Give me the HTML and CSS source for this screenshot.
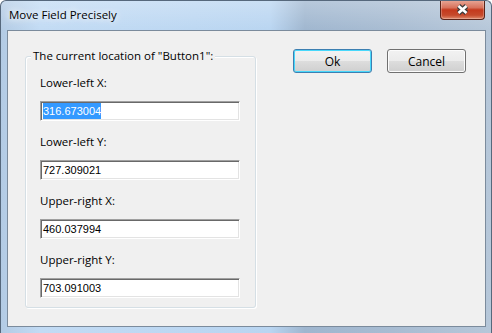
FILE: index.html
```html
<!DOCTYPE html>
<html lang="en">
<head>
    <meta charset="UTF-8">
    <title>Move Field Precisely</title>
    <link rel="stylesheet" href="styles.css">
</head>
<body>
    <div class="window">
        <div class="titlebar">
            <span class="title">Move Field Precisely</span>
            <div class="close">
                <svg width="13" height="11" viewBox="0 0 13 11">
                    <path d="M2.5 2 L10.5 9 M10.5 2 L2.5 9" stroke="#3c3c3c" stroke-width="5" fill="none"/>
                    <path d="M2.5 2 L10.5 9 M10.5 2 L2.5 9" stroke="#fff" stroke-width="2.6" fill="none"/>
                </svg>
            </div>
        </div>

        <div class="client">
            <div class="group">
                <div class="group-title">The current location of "Button1":</div>

                <div class="label">Lower-left X:</div>
                <div class="field"><span class="sel">316.673004</span></div>

                <div class="label">Lower-left Y:</div>
                <div class="field">727.309021</div>

                <div class="label">Upper-right X:</div>
                <div class="field">460.037994</div>

                <div class="label">Upper-right Y:</div>
                <div class="field">703.091003</div>
            </div>

            <div class="buttons">
                <button class="btn default">Ok</button>
                <button class="btn">Cancel</button>
            </div>
        </div>
    </div>
</body>
</html>
```

FILE: styles.css
```css
body {
    margin: 0;
    background: #fff;
    font-family: "Open Sans", "Noto Sans", sans-serif;
    font-size: 11.5px;
    color: #000;
}
.window {
    width: 492px;
    height: 333px;
    box-sizing: border-box;
    border: 1px solid #56687c;
    border-bottom: none;
    border-radius: 6px 6px 0 0;
    background:
        linear-gradient(180deg, rgba(255, 255, 255, 0.25), rgba(255, 255, 255, 0) 30px),
        linear-gradient(90deg, #b3cbe4 0%, #c2dbf4 8%, #b9d5f1 55%, #9fb6cf 62%, #a8bcd2 80%, #b6c7d9 100%);
    overflow: hidden;
}
.titlebar {
    height: 28px;
    display: flex;
}
.title {
    padding-left: 8px;
    line-height: 28px;
    font-size: 11.5px;
    text-shadow: 0 0 6px #fff, 0 0 10px #fff;
}
.close {
    margin-left: auto;
    margin-right: 6px;
    margin-top: -1px;
    width: 45px;
    height: 20px;
    box-sizing: border-box;
    border: 1px solid #5b2419;
    border-top: none;
    border-radius: 0 0 4px 4px;
    background: linear-gradient(180deg, #e9a999 0%, #d8735d 40%, #c4391d 52%, #c64a2c 80%, #e08a6c 100%);
    box-shadow: inset 0 0 0 1px rgba(255, 255, 255, 0.25);
    display: flex;
    align-items: center;
    justify-content: center;
}
.client {
    margin: 1px 5px 0 6px;
    height: 297px;
    box-sizing: border-box;
    border: 1px solid #7b8b9c;
    background: #f0f0f0;
    display: flex;
    align-items: flex-start;
}
.group {
    margin: 25px 0 0 17px;
    width: 231px;
    box-sizing: border-box;
    padding: 0 15px 9px 14px;
    border: 1px solid #d5dfe5;
    border-radius: 3px;
    box-shadow: inset 1px 1px 0 #fff, 1px 1px 0 #fff;
}
.group-title {
    width: fit-content;
    margin: -8px 0 0 -9px;
    padding: 0 2px;
    line-height: 14px;
    background: #f0f0f0;
}
.label {
    margin-top: 13px;
    line-height: 14px;
}
.label + .field {
    margin-top: 11px;
}
.field + .label {
    margin-top: 14px;
}
.field {
    width: 200px;
    height: 20px;
    box-sizing: border-box;
    border: 1px solid;
    border-color: #a0a0a0 #fff #fff #a0a0a0;
    box-shadow: inset 1px 1px 0 #696969, inset -1px -1px 0 #e3e3e3;
    background: #fff;
    padding: 0 2px;
    font-family: "Liberation Sans", Arial, sans-serif;
    font-size: 11px;
    line-height: 18px;
}
.sel {
    background: #3399ff;
    color: #fff;
    padding: 2px 0;
}
.buttons {
    margin: 18px 0 0 37px;
    display: flex;
    gap: 15px;
}
.btn {
    width: 79px;
    height: 24px;
    border: 1px solid #707070;
    border-radius: 3px;
    background: linear-gradient(180deg, #f2f2f2 0%, #ebebeb 50%, #dddddd 51%, #cfcfcf 100%);
    box-shadow: inset 0 0 0 1px #fcfcfc;
    font-family: inherit;
    font-size: 12px;
    color: #000;
    padding: 0;
}
.btn.default {
    border-color: #3c7fb1;
    box-shadow: inset 0 0 0 1px #48d8fb;
}
```
